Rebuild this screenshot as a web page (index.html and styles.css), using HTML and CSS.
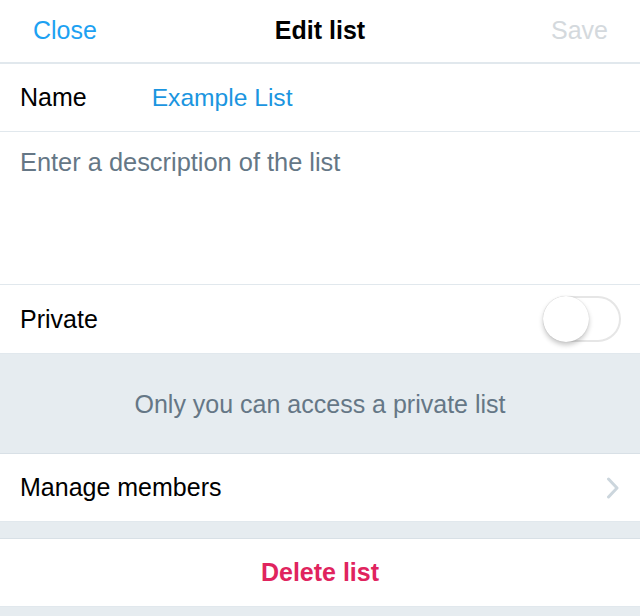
FILE: index.html
```html
<!DOCTYPE html>
<html>
<head>
<meta charset="utf-8">
<link rel="stylesheet" href="styles.css">
</head>
<body>
<div class="screen">
  <header class="nav">
    <span class="nav-btn close">Close</span>
    <span class="nav-title">Edit list</span>
    <span class="nav-btn save">Save</span>
  </header>
  <div class="row name-row">
    <span class="label">Name</span>
    <span class="name-value">Example List</span>
  </div>
  <div class="desc">
    <span class="placeholder">Enter a description of the list</span>
  </div>
  <div class="row private-row">
    <span class="label">Private</span>
    <span class="switch"><span class="knob"></span></span>
  </div>
  <div class="info">Only you can access a private list</div>
  <div class="row members-row">
    <span class="label">Manage members</span>
    <svg class="chevron" width="14" height="22" viewBox="0 0 14 22"><path d="M2.5 2 L11 11 L2.5 20" fill="none" stroke="#ccd6dd" stroke-width="3" stroke-linecap="round" stroke-linejoin="round"/></svg>
  </div>
  <div class="gap"></div>
  <div class="row delete-row">
    <span class="delete">Delete list</span>
  </div>
  <div class="gap bottom"></div>
</div>
</body>
</html>
```
FILE: styles.css
```css
* { box-sizing: border-box; }
html, body { margin: 0; padding: 0; background: #ffffff; }
body {
  font-family: "Liberation Sans", Arial, sans-serif;
  font-size: 25px;
  color: #14171a;
  width: 640px;
  height: 616px;
  overflow: hidden;
}
.screen { display: flex; flex-direction: column; }
.nav {
  height: 64px;
  display: flex;
  align-items: center;
  justify-content: space-between;
  padding: 0 32px 2px 33px;
  border-bottom: 2px solid #e1e8ed;
  position: relative;
}
.nav-btn { font-size: 25px; }
.close { color: #1da1f2; }
.save { color: #d4d9dd; }
.nav-title {
  position: absolute;
  left: 0; right: 0;
  text-align: center;
  font-weight: bold;
  font-size: 25px;
  color: #000;
  top: 16px;
}
.row {
  display: flex;
  align-items: center;
  padding: 0 20px;
  background: #fff;
  border-bottom: 1.5px solid #e1e8ed;
}
.label { color: #000; }
.name-row { height: 68px; }
.name-value { color: #1b95e0; margin-left: 65px; font-size: 24.6px; }
.desc {
  height: 153px;
  padding: 16px 20px 0;
  border-bottom: 1.5px solid #e1e8ed;
}
.placeholder { color: #657786; font-size: 25.4px; }
.private-row { height: 69px; justify-content: space-between; padding-right: 19px; }
.switch {
  width: 78px;
  height: 46px;
  border-radius: 23px;
  border: 2px solid #e6e6e6;
  background: #fff;
  position: relative;
}
.knob {
  position: absolute;
  left: -2px; top: -2px;
  width: 46px; height: 46px;
  border-radius: 50%;
  background: #fff;
  box-shadow: 0 3px 5px rgba(0,0,0,0.22), 0 0 1px rgba(0,0,0,0.2);
}
.info {
  height: 100px;
  background: #e6ecf0;
  border-bottom: 1.5px solid #d8e0e6;
  display: flex;
  align-items: center;
  justify-content: center;
  color: #657786;
  font-size: 25px;
  padding-top: 2px;
}
.members-row { height: 68px; justify-content: space-between; padding-right: 20px; }
.chevron { display: block; }
.gap {
  height: 17px;
  background: #e6ecf0;
  border-bottom: 1.5px solid #d8e0e6;
}
.delete-row { height: 68px; justify-content: center; }
.delete { color: #e0245e; font-weight: bold; font-size: 25px; }
.gap.bottom { height: 20px; border-bottom: none; }
```
